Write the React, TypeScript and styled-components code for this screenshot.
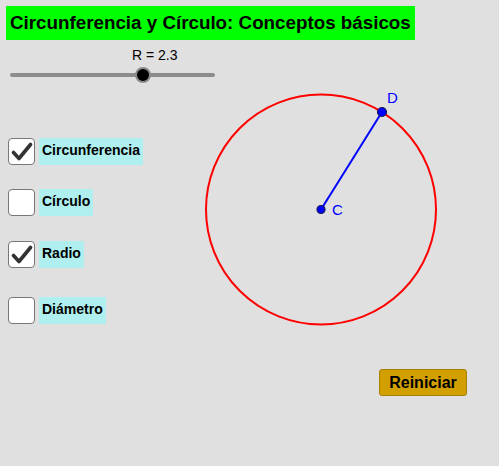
import React, { useState } from 'react';
import styled, { createGlobalStyle } from 'styled-components';

const GlobalStyle = createGlobalStyle`
  html, body {
    margin: 0;
    padding: 0;
    background: #e0e0e0;
  }
  body {
    font-family: "Liberation Sans", Arial, sans-serif;
  }
`;

const Page = styled.div`
  width: 499px;
  height: 466px;
  padding: 6px 0 0 6px;
  box-sizing: border-box;
  background: #e0e0e0;
  color: #000;
  display: flex;
  flex-direction: column;
`;

const Title = styled.div`
  align-self: flex-start;
  height: 34px;
  padding: 0 4px;
  background: #00ff00;
  font-size: 18.8px;
  font-weight: bold;
  line-height: 34px;
  white-space: nowrap;
`;

const Body = styled.div`
  display: flex;
`;

const Controls = styled.div`
  width: 194px;
  display: flex;
  flex-direction: column;
`;

const SliderBox = styled.div`
  margin-top: 7px;
  padding-left: 4px;
  display: flex;
  flex-direction: column;
`;

const SliderLabel = styled.div`
  margin-left: 122px;
  font-size: 14px;
  line-height: 16px;
  white-space: nowrap;
`;

const Track = styled.div`
  position: relative;
  width: 205px;
  height: 4px;
  margin-top: 10px;
  border-radius: 2px;
  background: #8c8c8c;
`;

const Knob = styled.div`
  position: absolute;
  top: -6px;
  width: 12px;
  height: 12px;
  margin-left: -8px;
  border-radius: 50%;
  background: #000;
  border: 2px solid #8a8a8a;
`;

const CheckList = styled.div`
  margin-top: 61px;
  margin-left: 2px;
  display: flex;
  flex-direction: column;
`;

const Row = styled.label<{ $space: number }>`
  display: flex;
  align-items: center;
  gap: 4px;
  margin-top: ${({ $space }) => $space}px;
  cursor: pointer;
`;

const Box = styled.span`
  width: 25px;
  height: 25px;
  border: 1.5px solid #777;
  border-radius: 4px;
  background: #fff;
  display: flex;
  align-items: center;
  justify-content: center;
`;

const Tag = styled.span`
  height: 27px;
  padding: 0 3px;
  background: #afefef;
  font-size: 14px;
  font-weight: bold;
  line-height: 25px;
  white-space: nowrap;
`;

const Stage = styled.div`
  width: 267px;
  display: flex;
  flex-direction: column;
  align-items: flex-end;
`;

const Canvas = styled.svg`
  display: block;
  width: 267px;
  height: 300px;
  font-family: "Liberation Sans", Arial, sans-serif;
`;

const ResetButton = styled.button`
  margin-top: 29px;
  width: 88px;
  height: 27px;
  padding: 0;
  background: #d19f00;
  border: 1px solid #a68000;
  border-radius: 3px;
  font-family: "Liberation Sans", Arial, sans-serif;
  font-size: 16px;
  font-weight: bold;
  color: #000;
  cursor: pointer;
`;

const Check = () => (
  <svg width="22" height="20" viewBox="0 0 22 20">
    <path d="M2.5 10.5 L8 16.5 L19.5 2.5" fill="none" stroke="#333" strokeWidth="3.6" strokeLinecap="round" strokeLinejoin="round" />
  </svg>
);

const options = [
  { name: 'Circunferencia', on: true, space: 0 },
  { name: 'Círculo', on: false, space: 24 },
  { name: 'Radio', on: true, space: 25 },
  { name: 'Diámetro', on: false, space: 29 },
];

const App: React.FC = () => {
  const [checks, setChecks] = useState(options.map((o) => o.on));
  const r = 2.3;
  const knobX = 133;

  // canvas origin is page (200, 40)
  const cx = 121;
  const cy = 169.5;
  const rad = 115;
  const dx = 182;
  const dy = 72;

  return (
    <>
      <GlobalStyle />
      <Page>
        <Title>Circunferencia y Círculo: Conceptos básicos</Title>
        <Body>
          <Controls>
            <SliderBox>
              <SliderLabel>R = {r}</SliderLabel>
              <Track>
                <Knob style={{ left: knobX }} />
              </Track>
            </SliderBox>
            <CheckList>
              {options.map((o, i) => (
                <Row
                  key={o.name}
                  $space={o.space}
                  onClick={() => setChecks(checks.map((c, j) => (j === i ? !c : c)))}
                >
                  <Box>{checks[i] && <Check />}</Box>
                  <Tag>{o.name}</Tag>
                </Row>
              ))}
            </CheckList>
          </Controls>
          <Stage>
            <Canvas viewBox="0 0 267 300">
              {checks[0] && <circle cx={cx} cy={cy} r={rad} fill="none" stroke="#ff0000" strokeWidth="2" />}
              {checks[2] && <line x1={cx} y1={cy} x2={dx} y2={dy} stroke="#0000ff" strokeWidth="2" />}
              <circle cx={cx} cy={cy} r="4" fill="#0000ff" stroke="#1a1a4d" strokeWidth="1.2" />
              <circle cx={dx} cy={dy} r="4.5" fill="#0000ff" stroke="#1a1a4d" strokeWidth="1.2" />
              <text x="132" y="175" fontSize="15" fill="#0000ff">C</text>
              <text x="187" y="63" fontSize="15" fill="#0000ff">D</text>
            </Canvas>
            <ResetButton onClick={() => setChecks(options.map((o) => o.on))}>Reiniciar</ResetButton>
          </Stage>
        </Body>
      </Page>
    </>
  );
};

export default App;
